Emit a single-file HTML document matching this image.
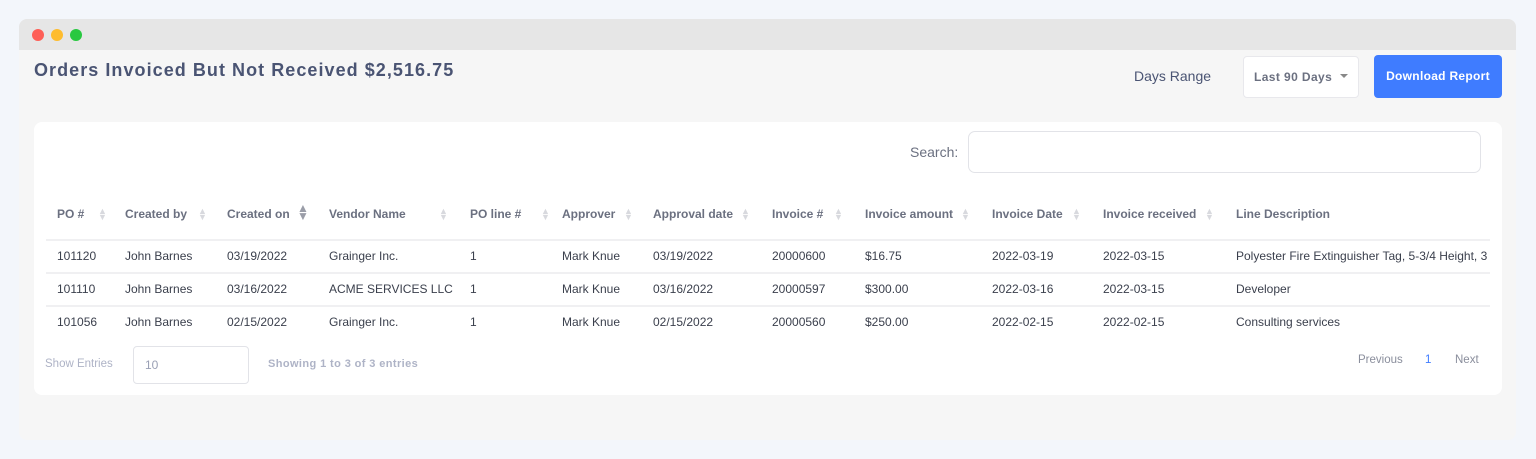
<!DOCTYPE html>
<html><head><meta charset="utf-8"><style>
*{margin:0;padding:0;box-sizing:border-box}
body{width:1536px;height:459px;background:#f3f6fb;font-family:"Liberation Sans",Arial,sans-serif;position:relative;overflow:hidden}
.win{position:absolute;left:19px;top:19px;width:1497px;height:421px;background:#f6f6f6;border-radius:8px;overflow:hidden}
.bar{height:31px;background:#e6e6e6}
.dot{position:absolute;top:10px;width:12px;height:12px;border-radius:50%}
.a{position:absolute;white-space:nowrap}
.card{position:absolute;left:15px;top:103px;width:1468px;height:273px;background:#fff;border-radius:8px}
.th{position:absolute;top:85px;font-size:12px;font-weight:bold;color:#6b7080}
.td{position:absolute;font-size:12px;color:#3a3f4c}
.line{position:absolute;left:12px;width:1444px;height:2px;background:#f0f0f2}
.s{position:absolute;top:86px;font-size:9px;line-height:6px;color:#d8d9de}
</style></head><body>
<div class="win">
<div class="bar"></div>
<div class="dot" style="left:13px;background:#fe5f57"></div>
<div class="dot" style="left:32px;background:#febc2e"></div>
<div class="dot" style="left:51px;background:#28c840"></div>
<div class="a" style="left:15px;top:41px;font-size:18px;font-weight:bold;color:#4a5473;letter-spacing:1.05px">Orders Invoiced But Not Received $2,516.75</div>
<div class="a" style="left:1115px;top:49px;font-size:14px;color:#4a5473">Days Range</div>
<div class="a" style="left:1224px;top:37px;width:116px;height:42px;background:#fff;border:1px solid #e8e8ec;border-radius:4px;font-size:12px;font-weight:bold;color:#6b7080;padding:13px 0 0 10px;letter-spacing:.4px">Last 90 Days <span style="display:inline-block;margin-left:4px;border:4px solid transparent;border-top-color:#888;vertical-align:-1px"></span></div>
<div class="a" style="left:1355px;top:36px;width:128px;height:43px;background:#3f7cff;border-radius:4px;font-size:12px;font-weight:bold;color:#fff;text-align:center;line-height:43px;letter-spacing:.3px">Download Report</div>
<div class="card">
<div class="a" style="left:876px;top:22px;font-size:14px;color:#6b7080">Search:</div>
<div class="a" style="left:934px;top:9px;width:513px;height:42px;border:1px solid #e2e3e8;border-radius:7px"></div>
<div class="th" style="left:23px">PO #</div>
<div class="th" style="left:91px">Created by</div>
<div class="th" style="left:193px">Created on</div>
<div class="th" style="left:295px">Vendor Name</div>
<div class="th" style="left:436px">PO line #</div>
<div class="th" style="left:528px">Approver</div>
<div class="th" style="left:619px">Approval date</div>
<div class="th" style="left:738px">Invoice #</div>
<div class="th" style="left:831px">Invoice amount</div>
<div class="th" style="left:958px">Invoice Date</div>
<div class="th" style="left:1069px">Invoice received</div>
<div class="th" style="left:1202px">Line Description</div>
<div class="s" style="left:64px">▲<br>▼</div>
<div class="s" style="left:164px">▲<br>▼</div>
<div class="a" style="left:263px;top:82px;font-size:12px;line-height:8px;color:#9a9da8">▲<br>▼</div>
<div class="s" style="left:405px">▲<br>▼</div>
<div class="s" style="left:507px">▲<br>▼</div>
<div class="s" style="left:590px">▲<br>▼</div>
<div class="s" style="left:707px">▲<br>▼</div>
<div class="s" style="left:800px">▲<br>▼</div>
<div class="s" style="left:927px">▲<br>▼</div>
<div class="s" style="left:1038px">▲<br>▼</div>
<div class="s" style="left:1171px">▲<br>▼</div>
<div class="line" style="top:117px"></div>
<div class="line" style="top:150px"></div>
<div class="line" style="top:183px"></div>
<div style="position:absolute;top:127px;left:0;width:100%">
<div class="td" style="left:23px">101120</div><div class="td" style="left:91px">John Barnes</div><div class="td" style="left:193px">03/19/2022</div><div class="td" style="left:295px">Grainger Inc.</div><div class="td" style="left:436px">1</div><div class="td" style="left:528px">Mark Knue</div><div class="td" style="left:619px">03/19/2022</div><div class="td" style="left:738px">20000600</div><div class="td" style="left:831px">$16.75</div><div class="td" style="left:958px">2022-03-19</div><div class="td" style="left:1069px">2022-03-15</div><div class="td" style="left:1202px;width:251px;overflow:hidden;white-space:nowrap">Polyester Fire Extinguisher Tag, 5-3/4 Height, 3</div>
</div>
<div style="position:absolute;top:160px;left:0;width:100%">
<div class="td" style="left:23px">101110</div><div class="td" style="left:91px">John Barnes</div><div class="td" style="left:193px">03/16/2022</div><div class="td" style="left:295px">ACME SERVICES LLC</div><div class="td" style="left:436px">1</div><div class="td" style="left:528px">Mark Knue</div><div class="td" style="left:619px">03/16/2022</div><div class="td" style="left:738px">20000597</div><div class="td" style="left:831px">$300.00</div><div class="td" style="left:958px">2022-03-16</div><div class="td" style="left:1069px">2022-03-15</div><div class="td" style="left:1202px">Developer</div>
</div>
<div style="position:absolute;top:193px;left:0;width:100%">
<div class="td" style="left:23px">101056</div><div class="td" style="left:91px">John Barnes</div><div class="td" style="left:193px">02/15/2022</div><div class="td" style="left:295px">Grainger Inc.</div><div class="td" style="left:436px">1</div><div class="td" style="left:528px">Mark Knue</div><div class="td" style="left:619px">02/15/2022</div><div class="td" style="left:738px">20000560</div><div class="td" style="left:831px">$250.00</div><div class="td" style="left:958px">2022-02-15</div><div class="td" style="left:1069px">2022-02-15</div><div class="td" style="left:1202px">Consulting services</div>
</div>
<div class="a" style="left:11px;top:236px;font-size:11.5px;color:#aeb3c6">Show Entries</div>
<div class="a" style="left:99px;top:224px;width:116px;height:38px;border:1px solid #e2e3e8;border-radius:4px;font-size:12px;color:#9aa0b5;padding:11px 0 0 11px">10</div>
<div class="a" style="left:234px;top:236px;font-size:11px;font-weight:bold;color:#aeb3c6;letter-spacing:.4px">Showing 1 to 3 of 3 entries</div>
<div class="a" style="left:1324px;top:232px;font-size:11.5px;color:#8a8e9c">Previous</div>
<div class="a" style="left:1391px;top:232px;font-size:11.5px;color:#3f7cff">1</div>
<div class="a" style="left:1421px;top:232px;font-size:11.5px;color:#8a8e9c">Next</div>
</div>
</div>
</body></html>
